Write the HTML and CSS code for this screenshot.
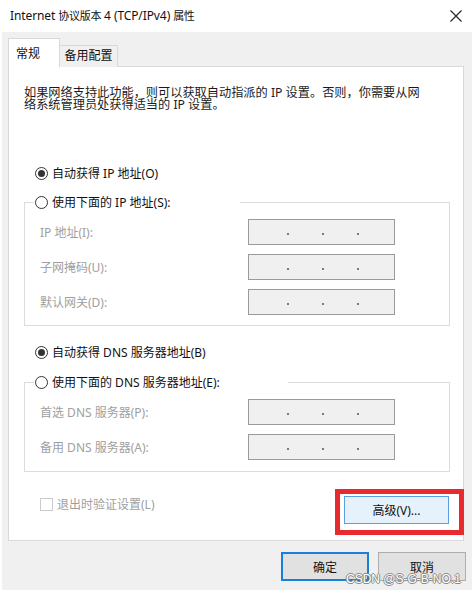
FILE: index.html
```html
<!DOCTYPE html>
<html lang="zh-CN">
<head>
<meta charset="utf-8">
<title>Internet 协议版本 4 (TCP/IPv4) 属性</title>
<link rel="stylesheet" href="styles.css">
</head>
<body>
<div class="window">
  <div class="titlebar">
    <span class="title">Internet <span class="cjk">协议版本</span> 4 (TCP/IPv4) <span class="cjk">属性</span></span>
    <svg class="close" width="12" height="12" viewBox="0 0 12 12"><path d="M0.5 0.5L11.5 11.5M11.5 0.5L0.5 11.5" stroke="#222" stroke-width="1.1" fill="none"/></svg>
  </div>
  <div class="main">
    <div class="tabs">
      <div class="tab active">常规</div>
      <div class="tab">备用配置</div>
    </div>
    <div class="panel">
      <p class="desc">如果网络支持此功能，则可以获取自动指派的 IP 设置。否则，你需要从网<br>络系统管理员处获得适当的 IP 设置。</p>

      <div class="radio-row r-auto-ip"><span class="radio checked"></span><span>自动获得 IP 地址(O)</span></div>
      <fieldset class="group g-ip">
        <legend class="legend-ip"><span class="radio-row"><span class="radio"></span><span>使用下面的 IP 地址(S):</span></span></legend>
        <div class="field"><span class="label">IP 地址(I):</span><span class="ipbox"><i></i><i></i><i></i></span></div>
        <div class="field"><span class="label">子网掩码(U):</span><span class="ipbox"><i></i><i></i><i></i></span></div>
        <div class="field"><span class="label">默认网关(D):</span><span class="ipbox"><i></i><i></i><i></i></span></div>
      </fieldset>

      <div class="radio-row r-auto-dns"><span class="radio checked"></span><span>自动获得 DNS 服务器地址(B)</span></div>
      <fieldset class="group g-dns">
        <legend class="legend-dns"><span class="radio-row"><span class="radio"></span><span>使用下面的 DNS 服务器地址(E):</span></span></legend>
        <div class="field"><span class="label">首选 DNS 服务器(P):</span><span class="ipbox"><i></i><i></i><i></i></span></div>
        <div class="field"><span class="label">备用 DNS 服务器(A):</span><span class="ipbox"><i></i><i></i><i></i></span></div>
      </fieldset>

      <div class="bottom-row">
        <label class="check-row"><span class="checkbox"></span><span>退出时验证设置(L)</span></label>
        <div class="adv-wrap"><button class="btn adv">高级(V)...</button></div>
      </div>
    </div>
    <div class="footer">
      <button class="btn default">确定</button>
      <button class="btn">取消</button>
    </div>
  </div>
  <div class="watermark">CSDN @S-G-B-NO.1</div>
</div>
</body>
</html>
```

FILE: styles.css
```css
*, *::before, *::after { box-sizing: border-box; }
html, body { margin: 0; padding: 0; }
body {
  width: 474px;
  height: 592px;
  overflow: hidden;
  background: #ffffff;
  font-family: "Noto Sans", "Noto Sans CJK SC", sans-serif;
  font-size: 12px;
  color: #111;
}
.window { position: relative; height: 592px; }

.titlebar {
  height: 32px;
  background: #ffffff;
  display: flex;
  align-items: center;
  justify-content: space-between;
  padding: 0 12px 2px 10px;
}
.title { font-size: 12px; color: #111; letter-spacing: -0.1px; }
.title .cjk { font-size: 11px; letter-spacing: -0.3px; }
.close { display: block; margin-top: 2px; }

.main {
  margin: 0 2px;
  height: 558px;
  background: #f0f0f0;
  padding: 6px 6px 0 6px;
}

.tabs {
  display: flex;
  align-items: flex-end;
  height: 29px;
  margin-bottom: -1px;
}
.tab {
  border: 1px solid #d9d9d9;
  border-bottom: none;
  background: #f0f0f0;
  height: 22px;
  padding: 0 4px;
  width: 59px;
  line-height: 19px;
  font-size: 12px;
  color: #111;
  text-align: center;
}
.tab.active {
  position: relative;
  z-index: 1;
  height: 29px;
  width: 52px;
  background: #fff;
  text-align: left;
  padding-left: 7px;
  line-height: 29px;
  margin-right: -1px;
}

.panel {
  width: 456px;
  height: 475px;
  border: 1px solid #d9d9d9;
  background: #ffffff;
  padding: 20px 13px 0 15px;
}
.desc { margin: 0; line-height: 12px; font-size: 12.2px; color: #1a1a1a; }

.radio-row {
  display: flex;
  align-items: center;
  height: 16px;
  gap: 4px;
  white-space: nowrap;
  color: #111;
}
.r-auto-ip { margin-top: 54px; padding-left: 11px; }
.r-auto-dns { margin-top: 18px; padding-left: 11px; }

.radio {
  width: 13px;
  height: 13px;
  border: 1px solid #333;
  border-radius: 50%;
  background: #fff;
  display: inline-flex;
  align-items: center;
  justify-content: center;
  flex: none;
}
.radio.checked::before {
  content: "";
  width: 7px;
  height: 7px;
  border-radius: 50%;
  background: #333;
}

.group {
  margin: 13px 0 0 0;
  padding: 0 0 10px 0;
  border: 1px solid #dcdcdc;
  min-width: 0;
  width: 426px;
}
.g-dns { margin-top: 14px; padding-bottom: 11px; }
legend {
  padding: 0 0 0 1px;
  margin-left: 9px;
  height: 16px;
}
.legend-ip { width: 206px; }
.legend-dns { width: 254px; }

.field {
  display: flex;
  align-items: center;
  height: 26px;
  margin-top: 9px;
  padding-left: 15px;
}
.label { width: 208px; color: #a0a0a0; }
.ipbox {
  width: 147px;
  height: 26px;
  border: 1px solid #9a9a9a;
  background: #f0f0f0;
  display: flex;
  gap: 33px;
  padding: 13px 0 0 38px;
}
.ipbox i { display: block; width: 2px; height: 2px; background: #7a7a7a; }

.bottom-row {
  display: flex;
  justify-content: space-between;
  align-items: flex-start;
  margin-top: 24px;
}
.check-row {
  display: flex;
  align-items: center;
  height: 16px;
  gap: 4px;
  margin-left: 16px;
  color: #a0a0a0;
}
.checkbox {
  width: 13px;
  height: 13px;
  border: 1px solid #cccccc;
  background: #fff;
}

.btn {
  font-family: "Noto Sans", "Noto Sans CJK SC", sans-serif;
  font-size: 12px;
  color: #111;
  width: 88px;
  height: 29px;
  padding: 0;
  background: #e1e1e1;
  border: 1px solid #adadad;
}
.btn.default { border: 2px solid #1a7fd6; }

.adv-wrap { position: relative; margin-right: 1px; }
.btn.adv {
  display: block;
  width: 105px;
  height: 28px;
  background: #e5f1fb;
  border: 1px solid #5a9fdf;
}
.adv-wrap::after {
  content: "";
  position: absolute;
  left: -9px;
  top: -7px;
  width: 129px;
  height: 46px;
  border: 5px solid #e82a2e;
}

.footer {
  display: flex;
  justify-content: flex-end;
  gap: 9px;
  margin-top: 11px;
}

.watermark {
  position: absolute;
  left: 346px;
  top: 572px;
  font-family: "Liberation Sans", sans-serif;
  font-size: 12px;
  color: #ffffff;
  text-shadow: 1px 0 0 #8a8a8a, -1px 0 0 #8a8a8a, 0 1px 0 #8a8a8a, 0 -1px 0 #8a8a8a;
}
```
